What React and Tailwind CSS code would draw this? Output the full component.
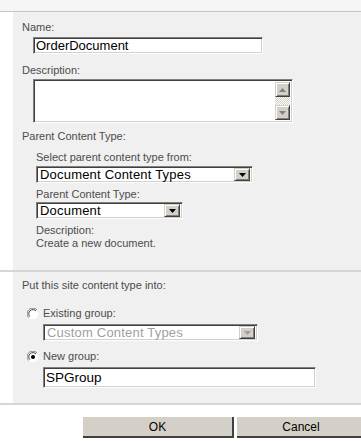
import { useState } from 'react'

const sunken = 'border border-t-[#808080] border-l-[#808080] border-b-white border-r-white shadow-[inset_1px_1px_0_#404040,inset_-1px_-1px_0_#d4d0c8] bg-white'
const raised = 'bg-[#d4d0c8] border border-t-[#d4d0c8] border-l-[#d4d0c8] border-b-[#404040] border-r-[#404040] shadow-[inset_1px_1px_0_#ffffff,inset_-1px_-1px_0_#808080]'

function Arrow({ up = false, color = '#000' }) {
    return (
        <svg width="7" height="4" viewBox="0 0 7 4">
            {up ? <polygon points="0,4 7,4 3.5,0" fill={color} /> : <polygon points="0,0 7,0 3.5,4" fill={color} />}
        </svg>
    )
}

function Select({ value, width, disabled = false }) {
    return (
        <div className={`${sunken} h-[17px] flex items-center justify-between pl-[3px] pr-[2px] ${width}`}>
            <span className={`text-[13px] leading-none tracking-[0.2px] ${disabled ? 'text-[#a0a0a0]' : 'text-black'}`}>{value}</span>
            <div className={`${raised} w-[16px] h-[13px] flex items-center justify-center`}>
                <Arrow color={disabled ? '#a0a0a0' : '#000'} />
            </div>
        </div>
    )
}

function Radio({ checked }) {
    return (
        <svg width="12" height="12" viewBox="0 0 12 12">
            <circle cx="6" cy="6" r="5.5" fill="#ffffff" />
            <path d="M10 2 A5.5 5.5 0 0 0 1.5 9.5" stroke="#808080" strokeWidth="1" fill="none" />
            <path d="M9 3 A4 4 0 0 0 2.8 8.6" stroke="#404040" strokeWidth="1" fill="none" />
            <path d="M2 10 A5.5 5.5 0 0 0 10.5 2.5" stroke="#f0f0f0" strokeWidth="1" fill="none" />
            {checked && <circle cx="6" cy="6" r="2" fill="#000" />}
        </svg>
    )
}

export default function App() {
    const [name, setName] = useState('OrderDocument')
    const [group, setGroup] = useState('SPGroup')
    const label = 'text-[11px] leading-[13px] text-[#4c4c4c]'

    return (
        <div className="w-[361px] h-[441px] bg-white overflow-hidden font-['Liberation_Sans',Arial,sans-serif]">
            <div className="h-[12px] bg-[#f5f5f5] border-b border-[#c4c4c4]" />

            {/* name / description / parent */}
            <div className="flex h-[258px]">
                <div className="w-[13px] bg-white" />
                <div className="flex-1 bg-[#f0f0f0] pl-[9px] pt-[9px]">
                    <div className={label}>Name:</div>
                    <input
                        value={name}
                        onChange={e => setName(e.target.value)}
                        className={`${sunken} block mt-[3px] ml-[11px] w-[230px] h-[17px] px-[2px] text-[13px] text-black outline-none`}
                    />
                    <div className={`${label} mt-[10px]`}>Description:</div>
                    <div className={`${sunken} mt-[2px] ml-[11px] w-[260px] h-[44px] flex justify-end p-[2px]`}>
                        <div className="w-[15px] flex flex-col">
                            <div className={`${raised} h-[15px] flex items-center justify-center`}>
                                <Arrow up color="#808080" />
                            </div>
                            <div className="flex-1 bg-[repeating-conic-gradient(#d4d0c8_0%_25%,#ffffff_0%_50%)] bg-[length:2px_2px]" />
                            <div className={`${raised} h-[15px] flex items-center justify-center`}>
                                <Arrow color="#808080" />
                            </div>
                        </div>
                    </div>
                    <div className={`${label} mt-[7px]`}>Parent Content Type:</div>
                    <div className="ml-[14px]">
                        <div className={`${label} mt-[8px]`}>Select parent content type from:</div>
                        <div className="mt-[2px]">
                            <Select value="Document Content Types" width="w-[217px]" />
                        </div>
                        <div className={`${label} mt-[5px]`}>Parent Content Type:</div>
                        <div className="mt-[1px]">
                            <Select value="Document" width="w-[147px]" />
                        </div>
                        <div className={`${label} mt-[5px]`}>Description:</div>
                        <div className={label}>Create a new document.</div>
                    </div>
                </div>
            </div>

            <div className="h-[2px] bg-[#d6d6d6]" />

            {/* group */}
            <div className="flex h-[131px]">
                <div className="w-[13px] bg-white" />
                <div className="flex-1 bg-[#f0f0f0] pl-[9px] pt-[7px]">
                    <div className={label}>Put this site content type into:</div>
                    <div className="ml-[5px]">
                        <div className={`flex items-center gap-[4px] mt-[15px] ${label}`}>
                            <Radio checked={false} />
                            <span>Existing group:</span>
                        </div>
                        <div className="mt-[4px] ml-[16px]">
                            <Select value="Custom Content Types" width="w-[215px]" disabled />
                        </div>
                        <div className={`flex items-center gap-[4px] mt-[9px] ${label}`}>
                            <Radio checked />
                            <span>New group:</span>
                        </div>
                        <input
                            value={group}
                            onChange={e => setGroup(e.target.value)}
                            className={`${sunken} block mt-[4px] ml-[16px] w-[273px] h-[21px] px-[2px] text-[13.5px] text-black outline-none`}
                        />
                    </div>
                </div>
            </div>

            <div className="h-[2px] bg-[#d6d6d6]" />

            <div className="flex gap-[3px] pl-[83px] pt-[12px]">
                <button className="shrink-0 w-[151px] h-[21px] bg-[#d4d0c8] border-r-2 border-b-2 border-[#404040] text-[12px] text-black">OK</button>
                <button className="shrink-0 w-[130px] h-[21px] bg-[#d4d0c8] border-r-2 border-b-2 border-[#404040] text-[12px] text-black">Cancel</button>
            </div>
        </div>
    )
}
